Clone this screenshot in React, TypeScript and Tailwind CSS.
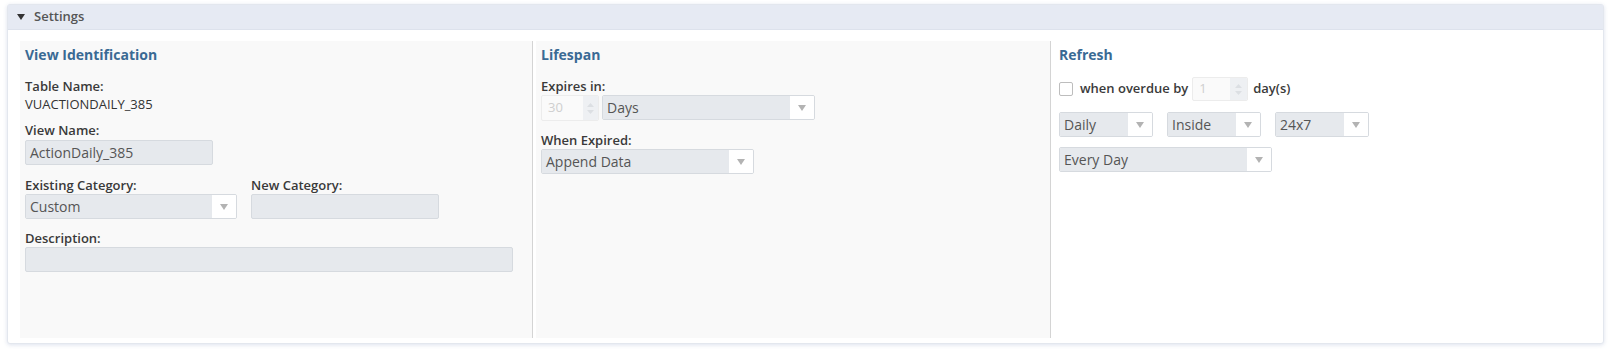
import React from "react";

const font = { fontFamily: '"Open Sans", "Noto Sans", sans-serif' };

function Tri({ color = "#b3b3b3" }: { color?: string }) {
  return (
    <svg width="8" height="6" viewBox="0 0 8 6">
      <path d="M0 0 L8 0 L4 6 Z" fill={color} />
    </svg>
  );
}

function Select({ w, text }: { w: string; text: string }) {
  return (
    <div className={`flex h-[25px] ${w} border border-[#d6dadf] rounded-[2px] overflow-hidden`}>
      <div className="flex-1 bg-[#e6e9ed] pl-[4px] flex items-center text-[14px] text-[#555]">{text}</div>
      <div className="w-[24px] bg-white flex items-center justify-center">
        <Tri />
      </div>
    </div>
  );
}

function Input({ w, text }: { w: string; text?: string }) {
  return (
    <div className={`flex items-center h-[25px] ${w} border border-[#d6dadf] rounded-[2px] bg-[#e6e9ed] pl-[4px] text-[14px] text-[#555]`}>
      {text}
    </div>
  );
}

function Spinner({ w, numW, text, h }: { w: string; numW: string; text: string; h: string }) {
  return (
    <div className={`flex ${h} ${w} border border-[#ececec] rounded-[2px] overflow-hidden bg-[#fafafa]`}>
      <div className={`${numW} flex items-center pl-[6px] text-[13px] text-[#cfcfcf]`}>{text}</div>
      <div className="flex-1 bg-[#eef0f3] flex flex-col items-center justify-center gap-[3px]">
        <svg width="7" height="4" viewBox="0 0 7 4"><path d="M0 4 L7 4 L3.5 0 Z" fill="#dcdfe3" /></svg>
        <svg width="7" height="4" viewBox="0 0 7 4"><path d="M0 0 L7 0 L3.5 4 Z" fill="#dcdfe3" /></svg>
      </div>
    </div>
  );
}

function Title({ children }: { children: React.ReactNode }) {
  return <div className="text-[14px] font-bold leading-[20px] text-[#3a6a94]">{children}</div>;
}

function Label({ children, className = "" }: { children: React.ReactNode; className?: string }) {
  return <div className={`text-[13px] font-semibold leading-[18px] text-[#3a3a3a] ${className}`}>{children}</div>;
}

export default function App() {
  return (
    <div className="w-[1611px] h-[349px] bg-white pt-[4px] pl-[7px]" style={font}>
      <div className="w-[1597px] border border-[#e3e7ee] rounded-[3px] shadow-[0_1px_4px_rgba(180,190,215,0.45)] bg-white">
        <div className="h-[25px] bg-[#e6eaf3] border-b border-[#dde2ec] flex items-center pl-[9px]">
          <Tri color="#333" />
          <span className="ml-[9px] text-[13px] font-semibold text-[#555]">Settings</span>
        </div>
        <div className="flex pl-[12px] pt-[11px] pb-[5px]">
          {/* Column 1 */}
          <div className="w-[513px] h-[297px] bg-[#f9f9f9] border-r border-[#d4d4d4] pl-[5px] pt-[4px]">
            <Title>View Identification</Title>
            <Label className="mt-[12px]">Table Name:</Label>
            <div className="text-[13px] leading-[18px] text-[#333]">VUACTIONDAILY_385</div>
            <Label className="mt-[8px]">View Name:</Label>
            <div className="mt-[1px]">
              <Input w="w-[188px]" text="ActionDaily_385" />
            </div>
            <div className="flex gap-[14px] mt-[11px]">
              <div>
                <Label>Existing Category:</Label>
                <Select w="w-[212px]" text="Custom" />
              </div>
              <div>
                <Label>New Category:</Label>
                <Input w="w-[188px]" />
              </div>
            </div>
            <Label className="mt-[10px]">Description:</Label>
            <Input w="w-[488px]" />
          </div>
          {/* Column 2 */}
          <div className="ml-[3px] w-[515px] h-[297px] bg-[#f9f9f9] border-r border-[#d4d4d4] pl-[5px] pt-[4px]">
            <Title>Lifespan</Title>
            <Label className="mt-[12px]">Expires in:</Label>
            <div className="flex gap-[3px]">
              <Spinner w="w-[58px]" numW="w-[41px]" text="30" h="h-[26px]" />
              <Select w="w-[213px]" text="Days" />
            </div>
            <Label className="mt-[10px]">When Expired:</Label>
            <Select w="w-[213px]" text="Append Data" />
          </div>
          {/* Column 3 */}
          <div className="flex-1 h-[297px] bg-white pl-[8px] pt-[4px]">
            <Title>Refresh</Title>
            <div className="flex items-center mt-[12px] h-[24px]">
              <div className="w-[14px] h-[14px] border border-[#bdbdbd] rounded-[2px] bg-white" />
              <span className="ml-[7px] text-[13px] font-semibold text-[#3a3a3a]">when overdue by</span>
              <div className="ml-[4px]">
                <Spinner w="w-[56px]" numW="w-[37px]" text="1" h="h-[24px]" />
              </div>
              <span className="ml-[5px] text-[13px] font-semibold text-[#3a3a3a]">day(s)</span>
            </div>
            <div className="flex gap-[14px] mt-[11px]">
              <Select w="w-[94px]" text="Daily" />
              <Select w="w-[94px]" text="Inside" />
              <Select w="w-[94px]" text="24x7" />
            </div>
            <div className="mt-[10px]">
              <Select w="w-[213px]" text="Every Day" />
            </div>
          </div>
        </div>
      </div>
    </div>
  );
}
